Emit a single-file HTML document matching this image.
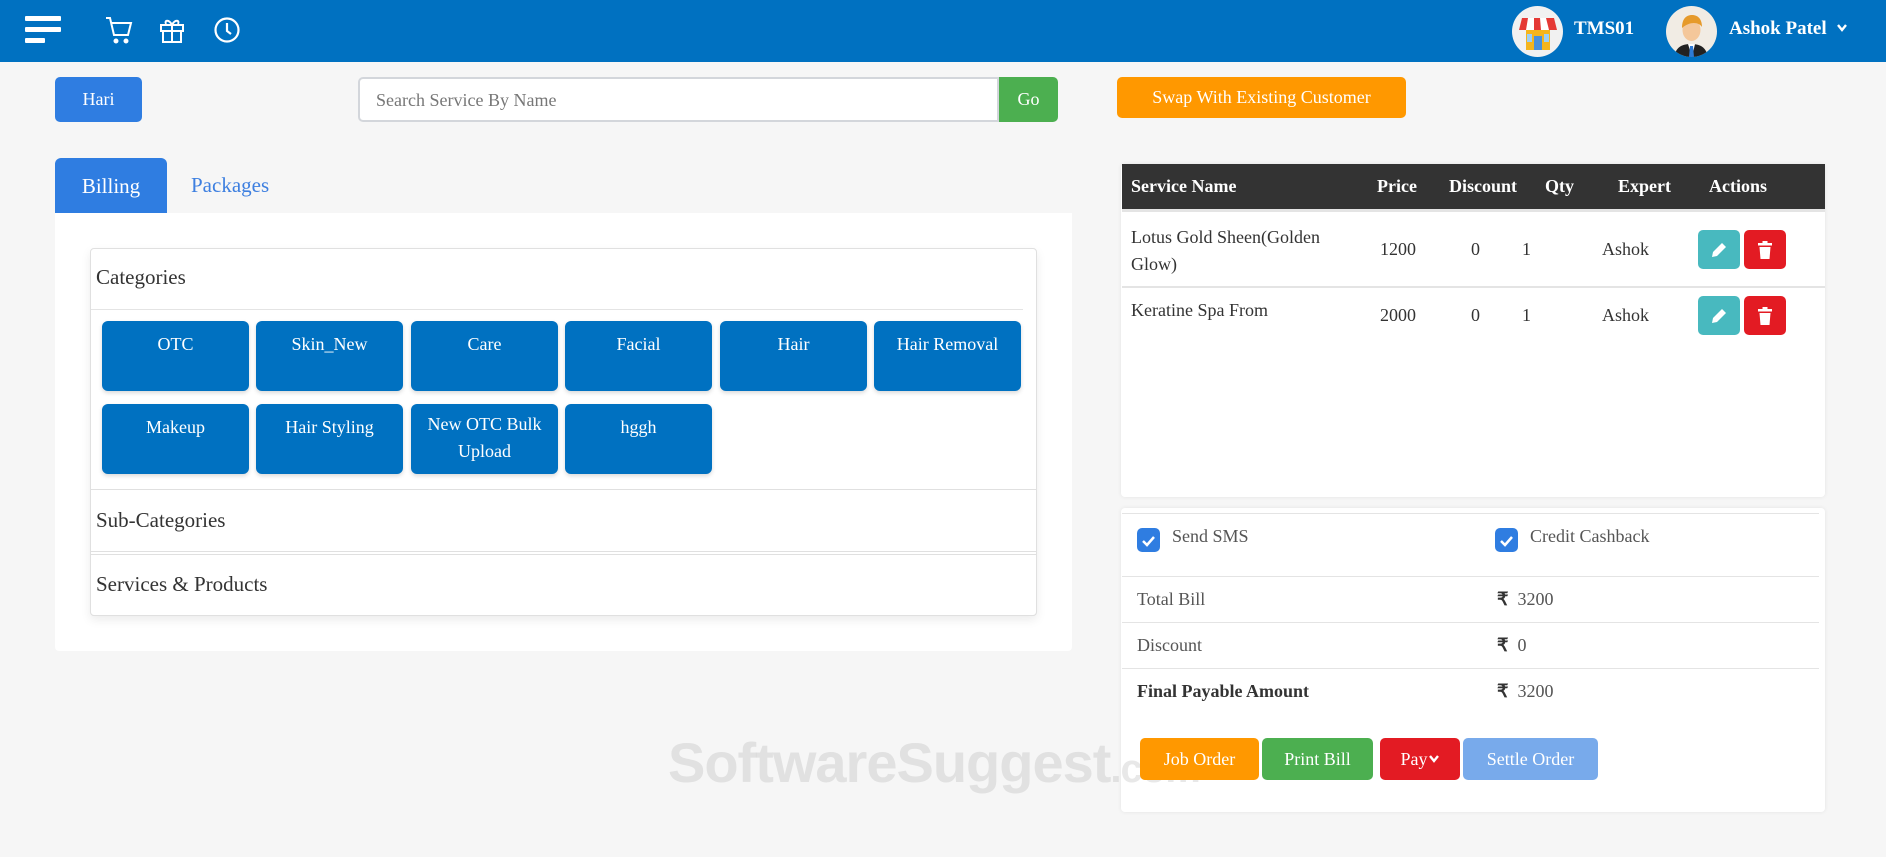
<!DOCTYPE html>
<html><head><meta charset="utf-8"><style>
*{box-sizing:border-box;margin:0;padding:0}
body{width:1886px;height:857px;background:#f6f6f6;font-family:"Liberation Serif",serif;color:#333;position:relative;overflow:hidden;font-size:18px}
.a{position:absolute}
.hdr{left:0;top:0;width:1886px;height:62px;background:#0071c1}
.btn{position:absolute;color:#fff;border-radius:5px;display:flex;align-items:center;justify-content:center;text-align:center;font-size:18px}
.cat{position:absolute;width:147px;height:70px;background:#0071c1;color:#fff;border-radius:6px;text-align:center;font-size:18px;padding-top:10px;line-height:27px;box-shadow:0 2px 4px rgba(0,0,0,.15)}
.th{position:absolute;top:176px;color:#fff;font-weight:bold;font-size:18px}
.td{position:absolute;font-size:18px;color:#333}
.line{position:absolute;height:2px;background:#e4e4e4}
.ib{position:absolute;width:42px;height:39px;border-radius:5px;display:flex;align-items:center;justify-content:center}
</style></head><body>
<div class="a hdr"></div>
<div class="a" style="left:25px;top:16px;width:36px;height:5px;background:#fff;border-radius:1px"></div>
<div class="a" style="left:25px;top:27px;width:36px;height:5px;background:#fff;border-radius:1px"></div>
<div class="a" style="left:25px;top:38px;width:20px;height:5px;background:#fff;border-radius:1px"></div>
<svg class="a" style="left:104px;top:16px" width="30" height="28" viewBox="0 0 30 28" fill="none" stroke="#fff" stroke-width="2"><path d="M2 2h4l4 17h14l3-12H8"/><circle cx="12" cy="25" r="1.5" fill="#fff"/><circle cx="22" cy="25" r="1.5" fill="#fff"/></svg>
<svg class="a" style="left:158px;top:16px" width="28" height="28" viewBox="0 0 28 28" fill="none" stroke="#fff" stroke-width="2"><rect x="3" y="9" width="22" height="6"/><rect x="5" y="15" width="18" height="11"/><path d="M14 9v17M14 9c-3-6-8-5-6-1M14 9c3-6 8-5 6-1"/></svg>
<svg class="a" style="left:212px;top:15px" width="30" height="30" viewBox="0 0 30 30" fill="none" stroke="#fff" stroke-width="2.2"><circle cx="15" cy="15" r="11.5"/><path d="M15 8v8l4 3"/></svg>
<div class="a" style="left:1512px;top:6px;width:51px;height:51px;border-radius:50%;background:#f1f1f1;overflow:hidden"><svg width="51" height="51"><rect x="14" y="22" width="24" height="22" fill="#f5b51c"/><path d="M10 12h32l3 12H7z" fill="#e53935"/><path d="M16 12h6v12h-8zM28 12h6l3 12h-8z" fill="#fff"/><rect x="22" y="30" width="8" height="14" fill="#4a90d9"/><rect x="15" y="28" width="5" height="8" fill="#9ccff5"/><rect x="32" y="28" width="5" height="8" fill="#9ccff5"/></svg></div>
<div class="a" style="left:1574px;top:18px;color:#fff;font-weight:bold;font-size:19px">TMS01</div>
<div class="a" style="left:1666px;top:6px;width:51px;height:51px;border-radius:50%;background:#f1ece4;overflow:hidden"><svg width="51" height="51"><path d="M8 51c2-10 8-13 17-13s15 3 17 13z" fill="#222"/><path d="M22 38h7l-3 13z" fill="#fff"/><path d="M24 40h3l1 11h-5z" fill="#2e7bd6"/><ellipse cx="25.5" cy="24" rx="9" ry="11" fill="#f4c79a"/><path d="M16 22c0-10 5-13 10-13s10 3 10 12c-3-5-12-6-20 1z" fill="#e69a2a"/></svg></div>
<div class="a" style="left:1729px;top:18px;color:#fff;font-weight:bold;font-size:19px">Ashok Patel</div>
<svg class="a" style="left:1836px;top:23px" width="12" height="10" viewBox="0 0 12 10"><path d="M2 2l4 5 4-5" stroke="#fff" stroke-width="2.4" fill="none"/></svg>

<div class="btn" style="left:55px;top:77px;width:87px;height:45px;background:#2f7de1">Hari</div>
<div class="a" style="left:358px;top:77px;width:641px;height:45px;background:#fff;border:2px solid #d3d6db;border-radius:5px 0 0 5px;padding:11px 16px;color:#777;font-size:18px">Search Service By Name</div>
<div class="btn" style="left:999px;top:77px;width:59px;height:45px;background:#4caf50;border-radius:0 5px 5px 0">Go</div>
<div class="btn" style="left:1117px;top:77px;width:289px;height:41px;background:#ff9800">Swap With Existing Customer</div>

<div class="btn" style="left:55px;top:158px;width:112px;height:56px;background:#2f7de1;border-radius:6px 6px 0 0;font-size:21px">Billing</div>
<div class="a" style="left:191px;top:173px;color:#3d7fe0;font-size:21px">Packages</div>
<div class="a" style="left:55px;top:213px;width:1017px;height:438px;background:#fff;border-radius:0 0 4px 4px"></div>
<div class="a" style="left:90px;top:248px;width:947px;height:368px;border:1px solid #e0e0e0;border-radius:4px;box-shadow:0 4px 10px rgba(0,0,0,.08);background:#fff"></div>
<div class="a" style="left:96px;top:265px;font-size:21px">Categories</div>
<div class="line" style="left:91px;top:309px;width:932px;height:1px"></div>
<div class="cat" style="left:102px;top:321px">OTC</div>
<div class="cat" style="left:256px;top:321px">Skin_New</div>
<div class="cat" style="left:411px;top:321px">Care</div>
<div class="cat" style="left:565px;top:321px">Facial</div>
<div class="cat" style="left:720px;top:321px">Hair</div>
<div class="cat" style="left:874px;top:321px">Hair Removal</div>
<div class="cat" style="left:102px;top:404px">Makeup</div>
<div class="cat" style="left:256px;top:404px">Hair Styling</div>
<div class="cat" style="left:411px;top:404px;padding-top:7px">New OTC Bulk Upload</div>
<div class="cat" style="left:565px;top:404px">hggh</div>
<div class="a" style="left:90px;top:489px;width:947px;height:63px;border:1px solid #e0e0e0;background:#fff"></div>
<div class="a" style="left:96px;top:508px;font-size:21px">Sub-Categories</div>
<div class="a" style="left:90px;top:554px;width:947px;height:62px;border:1px solid #e0e0e0;background:#fff;border-radius:0 0 4px 4px"></div>
<div class="a" style="left:96px;top:572px;font-size:21px">Services &amp; Products</div>

<div class="a" style="left:1121px;top:164px;width:704px;height:333px;background:#fff;border-radius:4px;box-shadow:0 0 4px rgba(0,0,0,.08)"></div>
<div class="a" style="left:1122px;top:164px;width:703px;height:45px;background:#333"></div>
<div class="th" style="left:1131px">Service Name</div>
<div class="th" style="left:1377px">Price</div>
<div class="th" style="left:1449px">Discount</div>
<div class="th" style="left:1545px">Qty</div>
<div class="th" style="left:1618px">Expert</div>
<div class="th" style="left:1709px">Actions</div>
<div class="line" style="left:1122px;top:209px;width:703px;height:3px"></div>
<div class="td" style="left:1131px;top:224px;line-height:27px">Lotus Gold Sheen(Golden<br>Glow)</div>
<div class="td" style="left:1380px;top:239px">1200</div>
<div class="td" style="left:1471px;top:239px">0</div>
<div class="td" style="left:1522px;top:239px">1</div>
<div class="td" style="left:1602px;top:239px">Ashok</div>
<div class="line" style="left:1122px;top:286px;width:703px"></div>
<div class="td" style="left:1131px;top:300px">Keratine Spa From</div>
<div class="td" style="left:1380px;top:305px">2000</div>
<div class="td" style="left:1471px;top:305px">0</div>
<div class="td" style="left:1522px;top:305px">1</div>
<div class="td" style="left:1602px;top:305px">Ashok</div>
<div class="ib" style="left:1698px;top:230px;background:#48b9bf"><svg width="20" height="20" viewBox="0 0 20 20"><path d="M3 17l1-5 9-9 4 4-9 9z" fill="#fff"/></svg></div>
<div class="ib" style="left:1744px;top:230px;background:#e31b23"><svg width="18" height="20" viewBox="0 0 18 20"><rect x="2" y="3" width="14" height="2.5" fill="#fff"/><rect x="6.5" y="1" width="5" height="3" fill="#fff"/><path d="M3.5 7h11l-1 12h-9z" fill="#fff"/></svg></div>
<div class="ib" style="left:1698px;top:296px;background:#48b9bf"><svg width="20" height="20" viewBox="0 0 20 20"><path d="M3 17l1-5 9-9 4 4-9 9z" fill="#fff"/></svg></div>
<div class="ib" style="left:1744px;top:296px;background:#e31b23"><svg width="18" height="20" viewBox="0 0 18 20"><rect x="2" y="3" width="14" height="2.5" fill="#fff"/><rect x="6.5" y="1" width="5" height="3" fill="#fff"/><path d="M3.5 7h11l-1 12h-9z" fill="#fff"/></svg></div>

<div class="a" style="left:1121px;top:508px;width:704px;height:304px;background:#fff;border-radius:4px;box-shadow:0 0 4px rgba(0,0,0,.08)"></div>
<div class="line" style="left:1122px;top:513px;width:697px;height:1px"></div>
<div class="a" style="left:1137px;top:528px;width:23px;height:24px;background:#2f7de1;border-radius:5px"><svg width="23" height="24"><path d="M6 13l4 4 7-8" stroke="#fff" stroke-width="2.5" fill="none"/></svg></div>
<div class="td" style="left:1172px;top:526px;color:#555">Send SMS</div>
<div class="a" style="left:1495px;top:528px;width:23px;height:24px;background:#2f7de1;border-radius:5px"><svg width="23" height="24"><path d="M6 13l4 4 7-8" stroke="#fff" stroke-width="2.5" fill="none"/></svg></div>
<div class="td" style="left:1530px;top:526px;color:#555">Credit Cashback</div>
<div class="line" style="left:1122px;top:576px;width:697px;height:1px"></div>
<div class="td" style="left:1137px;top:589px;color:#555">Total Bill</div>
<div class="td" style="left:1497px;top:589px;color:#555"><b style="color:#333">₹</b>&nbsp; 3200</div>
<div class="line" style="left:1122px;top:622px;width:697px;height:1px"></div>
<div class="td" style="left:1137px;top:635px;color:#555">Discount</div>
<div class="td" style="left:1497px;top:635px;color:#555"><b style="color:#333">₹</b>&nbsp; 0</div>
<div class="line" style="left:1122px;top:668px;width:697px;height:1px"></div>
<div class="td" style="left:1137px;top:681px;font-weight:bold">Final Payable Amount</div>
<div class="td" style="left:1497px;top:681px;color:#555"><b style="color:#333">₹</b>&nbsp; 3200</div>
<div class="a" style="left:668px;top:730px;font-family:'Liberation Sans',sans-serif;font-weight:bold;font-size:56px;color:rgba(150,150,150,.22);letter-spacing:-1px">SoftwareSuggest<span style="font-size:40px">.com</span></div>
<div class="btn" style="left:1140px;top:738px;width:119px;height:42px;background:#ff9800">Job Order</div>
<div class="btn" style="left:1262px;top:738px;width:111px;height:42px;background:#4caf50">Print Bill</div>
<div class="btn" style="left:1380px;top:738px;width:80px;height:42px;background:#e31b23">Pay<svg width="12" height="10" viewBox="0 0 12 10"><path d="M2 2l4 5 4-5" stroke="#fff" stroke-width="2.4" fill="none"/></svg></div>
<div class="btn" style="left:1463px;top:738px;width:135px;height:42px;background:#78aaeb">Settle Order</div>
</body></html>
